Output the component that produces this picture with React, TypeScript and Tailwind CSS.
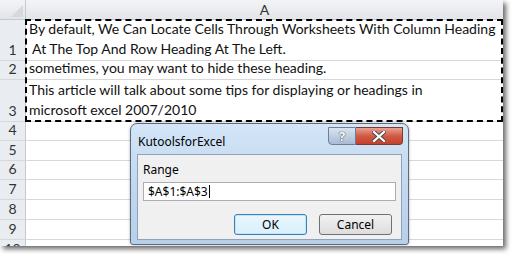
import React from "react";

const rows: { n: number; h: string; lines: string[] }[] = [
  {
    n: 1,
    h: "h-[41px]",
    lines: [
      "By default, We Can Locate Cells Through Worksheets With Column Heading",
      "\u00a0At The Top And Row Heading At The Left.",
    ],
  },
  { n: 2, h: "h-[19px]", lines: ["sometimes, you may want to hide these heading."] },
  {
    n: 3,
    h: "h-[42px]",
    lines: [
      "This article will talk about some tips for displaying or headings in",
      "microsoft excel 2007/2010",
    ],
  },
  { n: 4, h: "h-[19px]", lines: [] },
  { n: 5, h: "h-[20px]", lines: [] },
  { n: 6, h: "h-[19px]", lines: [] },
  { n: 7, h: "h-[20px]", lines: [] },
  { n: 8, h: "h-[20px]", lines: [] },
  { n: 9, h: "h-[20px]", lines: [] },
  { n: 10, h: "h-[20px]", lines: [] },
];

export default function App() {
  return (
    <div className="w-[511px] h-[254px] bg-white overflow-hidden">
      <div
        className="relative w-[503px] h-[246px] bg-white overflow-hidden shadow-[3px_3px_5px_rgba(0,0,0,0.6)]"
        style={{ fontFamily: "Lato, 'Liberation Sans', sans-serif" }}
      >
        {/* column header */}
        <div className="flex h-[20px] border-b border-[#c5c9ce] bg-gradient-to-b from-[#f3f4f6] to-[#e2e5e9]">
          <div className="w-[26px] h-full border-r border-[#c5c9ce] relative">
            <div className="absolute right-[2px] bottom-[2px] w-0 h-0 border-l-[12px] border-l-transparent border-b-[12px] border-b-[#d5d8dc]" />
          </div>
          <div className="flex-1 flex items-center justify-center text-[14px] text-[#333]">A</div>
        </div>

        {/* rows */}
        <div className="relative">
          {rows.map((r) => (
            <div key={r.n} className={`flex ${r.h} border-b border-[#d8d8d8]`}>
              <div className="w-[26px] shrink-0 bg-[#e9ecf0] border-r border-[#c5c9ce] flex items-end justify-center pb-[1px] text-[14px] leading-[18px] text-[#333]">
                {r.n}
              </div>
              <div className="flex-1 flex flex-col justify-end pl-[3px] pb-[1px] text-[14px] leading-[20px] text-[#111] whitespace-nowrap">
                {r.lines.map((l, i) => (
                  <div key={i}>{l}</div>
                ))}
              </div>
            </div>
          ))}
          {/* copy marquee A1:A3 */}
          <div className="absolute left-[25px] top-[-1px] w-[478px] h-[103px] border-2 border-dashed border-black pointer-events-none" />
        </div>

        {/* dialog */}
        <div
          className="absolute left-[130px] top-[123px] w-[279px] h-[122px] rounded-t-[7px] rounded-b-[3px] border border-[#5a6b80] bg-gradient-to-b from-[#d3e5f7] via-[#c2d8ef] to-[#b7cfe9] shadow-[0_0_3px_rgba(0,0,0,0.3)]"
          style={{ fontFamily: "'Noto Sans', 'DejaVu Sans', sans-serif" }}
        >
          <div className="flex h-[30px]">
            <div className="pl-[7px] pt-[11px] text-[12px] text-black leading-[14px]">KutoolsforExcel</div>
            <div className="ml-auto mr-[5px] mt-[3px] flex h-[18px]">
              <div className="w-[28px] h-full rounded-bl-[4px] border border-[#6d7f96] bg-gradient-to-b from-[#d8e4f1] to-[#a8bcd3] flex items-center justify-center text-white font-bold text-[13px] leading-none [text-shadow:0_0_1px_#333,0_0_1px_#333]">
                ?
              </div>
              <div className="w-[47px] h-full rounded-br-[4px] border border-l-0 border-[#7a3a30] bg-gradient-to-b from-[#e8a193] via-[#cf5a45] to-[#c4402c] flex items-center justify-center">
                <svg width="14" height="11" viewBox="0 0 14 11">
                  <path d="M2 1 L12 10 M12 1 L2 10" stroke="#4a4a4a" strokeWidth="4" strokeLinecap="square" />
                  <path d="M2 1 L12 10 M12 1 L2 10" stroke="#ffffff" strokeWidth="2.2" strokeLinecap="square" />
                </svg>
              </div>
            </div>
          </div>
          <div className="mx-[6px] h-[86px] border border-[#8fa3bd] bg-[#f0f0f0] flex flex-col px-[5px]">
            <div className="pt-[8px] text-[12px] leading-[14px] text-black">Range</div>
            <div className="mt-[5px] h-[19px] w-[253px] border border-[#abadb3] bg-white flex items-center pl-[4px] text-[12px] text-black leading-none">
              $A$1:$A$3<span className="w-[1px] h-[13px] bg-black ml-[1px]" />
            </div>
            <div className="mt-[13px] flex justify-end gap-[12px] pr-[4px]">
              <button className="w-[73px] h-[21px] rounded-[3px] border border-[#3c7fb1] bg-gradient-to-b from-[#eaf6fd] to-[#d9f0fc] shadow-[inset_0_0_0_1px_#bfe6fa] text-[12px] text-black">
                OK
              </button>
              <button className="w-[73px] h-[21px] rounded-[3px] border border-[#707070] bg-gradient-to-b from-[#f2f2f2] to-[#dddddd] text-[12px] text-black">
                Cancel
              </button>
            </div>
          </div>
        </div>
      </div>
    </div>
  );
}
